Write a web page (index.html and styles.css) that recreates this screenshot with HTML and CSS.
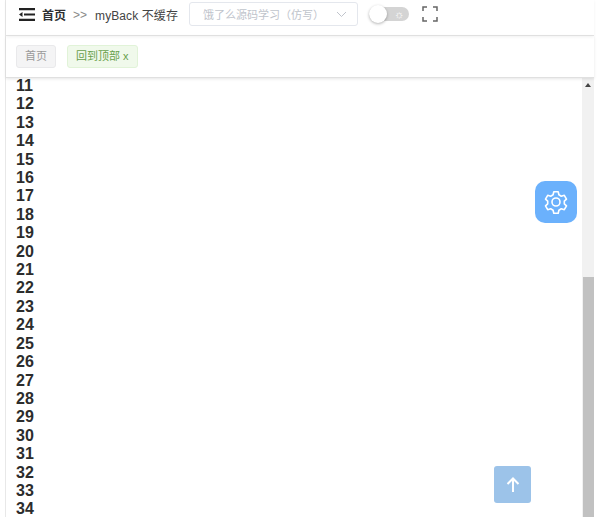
FILE: index.html
```html
<!DOCTYPE html>
<html>
<head>
  <title>myBack 不缓存</title>
  <link rel="stylesheet" href="styles.css">
</head>
<body>
  <div class="main">
    <div class="navbar">
      <svg class="fold-icon" width="16" height="13" viewBox="0 0 16 13">
        <path d="M0 0h16v2.200H0zM5 5.400h11v2.200H5zM0 10.800h16V13H0zM0 6.500L3.500 4v5z" fill="#222"/>
      </svg>
      <span class="crumb-home">首页</span>
      <span class="crumb-sep">&gt;&gt;</span>
      <span class="crumb-page">myBack 不缓存</span>
      <div class="select">
        <span>饿了么源码学习（仿写）</span>
        <svg width="11" height="7" viewBox="0 0 11 7">
          <path d="M1 1l4.500 4.500L10 1" fill="none" stroke="#c0c4cc" stroke-width="1"/>
        </svg>
      </div>
      <div class="theme-switch">
        <span class="theme-sun">☼</span>
        <span class="theme-knob"></span>
      </div>
      <svg class="full-icon" width="16" height="16" viewBox="0 0 16 16">
        <path d="M1 5V1h4M11 1h4v4M15 11v4h-4M5 15H1v-4" fill="none" stroke="#666" stroke-width="1.500"/>
      </svg>
    </div>
    <div class="tags">
      <span class="tag">首页</span>
      <span class="tag tag-active">回到顶部 <i>x</i></span>
    </div>
    <div class="content">
      <div class="numbers" id="numbers"></div>
      <div class="scrollbar">
        <div class="scroll-arrow"></div>
        <div class="scroll-thumb"></div>
      </div>
    </div>
  </div>

  <div class="settings-btn">
    <svg width="24" height="24" viewBox="0 0 24 24" fill="none" stroke="#fff" stroke-width="1.600">
      <path d="M9.800 1.800h4.400l.7 3 2.400 1.400 3-.9 2.200 3.800-2.200 2.100v2.600l2.200 2.100-2.200 3.800-3-.9-2.400 1.400-.7 3H9.800l-.7-3-2.400-1.400-3 .9-2.200-3.800 2.200-2.100v-2.600L1.500 9.100l2.200-3.800 3 .9 2.400-1.400z" stroke-linejoin="round"/>
      <circle cx="12" cy="12" r="4"/>
    </svg>
  </div>
  <div class="top-btn">
    <svg width="14" height="15" viewBox="0 0 14 15" fill="none" stroke="#fff" stroke-width="2">
      <path d="M7 15V2M1.500 7L7 1.500 12.500 7"/>
    </svg>
  </div>

  <script src="app.js"></script>
</body>
</html>
```

FILE: styles.css
```css
* {
  box-sizing: border-box;
}

html, body {
  margin: 0;
  height: 100%;
  overflow: hidden;
  background: #fff;
  font-family: "Liberation Sans", "Noto Sans CJK SC", sans-serif;
}

.main {
  margin-left: 5px;
  width: 589px;
  height: 517px;
  border-left: 1px solid #e8e8e8;
  display: flex;
  flex-direction: column;
}

.navbar {
  height: 36px;
  flex: none;
  display: flex;
  align-items: center;
  padding: 0 0 7px 13px;
  border-bottom: 1px solid #e4e4e4;
  box-shadow: 0 1px 3px rgba(0,0,0,0.06);
  font-size: 12px;
}

.crumb-home {
  margin-left: 7px;
  font-weight: bold;
  color: #303133;
}

.crumb-sep {
  margin-left: 7px;
  margin-top: 2px;
  color: #888;
}

.crumb-page {
  margin-left: 8px;
  color: #444;
  letter-spacing: 0.1px;
}

.select {
  width: 169px;
  height: 24px;
  margin-left: 11px;
  padding: 0 10px 0 13px;
  display: flex;
  align-items: center;
  justify-content: space-between;
  border: 1px solid #e4e7ed;
  border-radius: 3px;
  color: #c0c4cc;
  font-size: 11px;
}

.theme-switch {
  position: relative;
  width: 40px;
  height: 14px;
  margin-left: 11px;
  border-radius: 7px;
  background: #d4d4d4;
  color: #fff;
  font-size: 11px;
  line-height: 14px;
  text-align: right;
  padding-right: 5px;
}

.theme-knob {
  position: absolute;
  left: 0;
  top: -2px;
  width: 18px;
  height: 18px;
  border-radius: 50%;
  background: #fff;
  box-shadow: 0 1px 3px rgba(0,0,0,0.3);
}

.full-icon {
  margin-left: 13px;
}

.tags {
  height: 42px;
  flex: none;
  display: flex;
  align-items: center;
  gap: 11px;
  padding: 0 0 1px 10px;
  border-bottom: 1px solid #e0e0e0;
  box-shadow: 0 1px 3px rgba(0,0,0,0.1);
  position: relative;
}

.tag {
  height: 23px;
  padding: 0 8px;
  line-height: 21px;
  font-size: 11px;
  color: #999;
  background: #f4f4f5;
  border: 1px solid #e9e9eb;
  border-radius: 3px;
}

.tag-active {
  color: #67a04a;
  background: #f0f9eb;
  border-color: #e1f3d8;
}

.tag-active i {
  font-style: normal;
}

.content {
  flex: 1;
  min-height: 0;
  display: flex;
  overflow: hidden;
}

.numbers {
  flex: 1;
  margin-top: -1px;
  padding: 0 0 0 10px;
  font-size: 16px;
  line-height: 18.4px;
  font-weight: bold;
  color: #2c2c2c;
}

.scrollbar {
  width: 12px;
  background: #f1f1f1;
  display: flex;
  flex-direction: column;
  justify-content: space-between;
  align-items: center;
}

.scroll-arrow {
  margin-top: 5px;
  border-left: 3px solid transparent;
  border-right: 3px solid transparent;
  border-bottom: 4px solid #444;
}

.scroll-thumb {
  width: 11px;
  height: 240px;
  background: #c1c1c1;
}

.settings-btn {
  position: absolute;
  left: 535px;
  top: 181px;
  width: 42px;
  height: 42px;
  border-radius: 10px;
  background: #6bb1fc;
  display: flex;
  align-items: center;
  justify-content: center;
}

.top-btn {
  position: absolute;
  left: 494px;
  top: 466px;
  width: 37px;
  height: 37px;
  border-radius: 3px;
  background: #9cc3e9;
  display: flex;
  align-items: center;
  justify-content: center;
}
```

FILE: app.js
```js
var box = document.getElementById('numbers');
for (var i = 11; i <= 34; i++) {
  var row = document.createElement('div');
  row.textContent = i;
  box.appendChild(row);
}
```
